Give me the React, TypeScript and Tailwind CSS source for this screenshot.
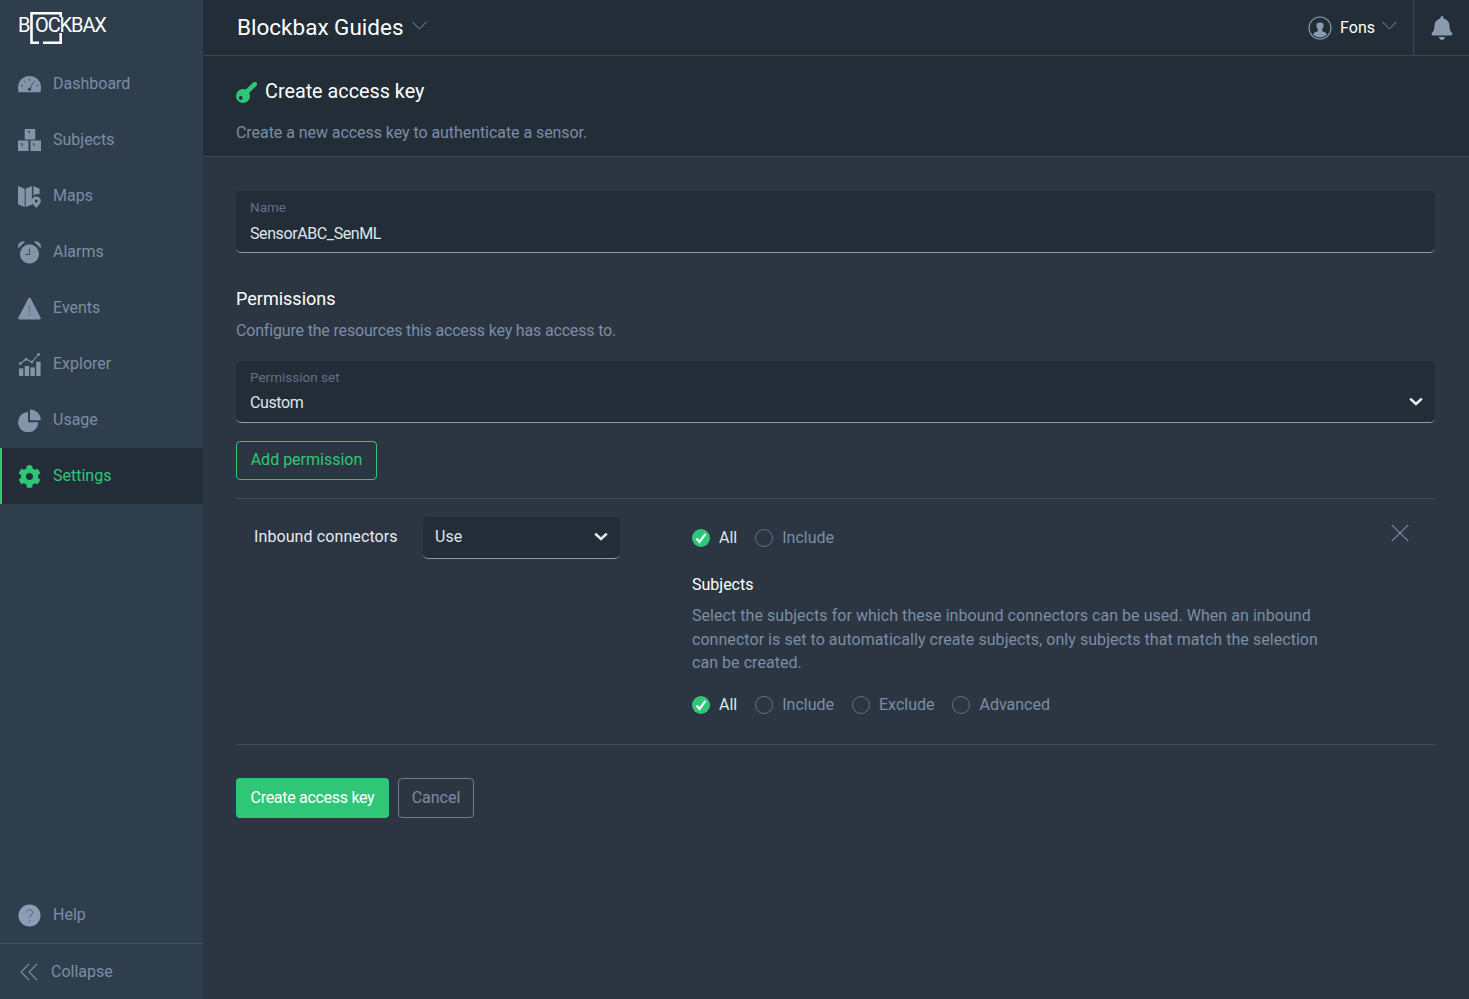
import { FaCog, FaBell } from "react-icons/fa"
import type { ReactNode } from "react"

const font = { fontFamily: 'Roboto, "Noto Sans", sans-serif' }
const dark = "#2f3e4d"

function GaugeIcon({ className }: { className?: string }) {
  return (
    <svg viewBox="0 0 24 24" className={className} fill="currentColor">
      <path d="M0.6 20 Q0 18 0 15 A12 12 0 0 1 24 15 Q24 18 23.4 20 Z" />
      <path d="M12 6 V8 M6.5 8 L7.6 9.6 M17.5 8 L16.4 9.6 M3 13 L5 13.6 M21 13 L19 13.6 M12 17 L15.5 10.5" stroke={dark} strokeWidth="0.9" fill="none" />
      <circle cx="12" cy="17" r="1.6" fill={dark} />
    </svg>
  )
}

function BoxesIcon({ className }: { className?: string }) {
  return (
    <svg viewBox="0 0 24 24" className={className} fill="currentColor">
      <rect x="7" y="0" width="11" height="11" />
      <rect x="0" y="12" width="11" height="11" />
      <rect x="13" y="12" width="11" height="11" />
      <path d="M12 5 V2.5 H9.5 M4.5 18 V15.5 H2.5 M17 18 V15.5 H15" fill="none" stroke={dark} strokeWidth="0.8" />
    </svg>
  )
}

function MapIcon({ className }: { className?: string }) {
  return (
    <svg viewBox="0 0 24 24" className={className} fill="currentColor">
      <path d="M0 1 L7 4 V23 L0 20 Z" />
      <path d="M8 4 L14.5 1 V14 Q14.5 18 15.5 20 L8 23 Z" />
      <path d="M16 1 L22.5 4 V10 A6 6 0 0 0 16 11 Z" />
      <path d="M19 12 A4.8 4.8 0 0 1 23.8 16.8 Q23.8 19 19 24 Q14.2 19 14.2 16.8 A4.8 4.8 0 0 1 19 12 Z M19 15.2 A1.6 1.6 0 1 0 19 18.4 A1.6 1.6 0 1 0 19 15.2 Z" fillRule="evenodd" />
    </svg>
  )
}

function AlarmIcon({ className }: { className?: string }) {
  return (
    <svg viewBox="0 0 24 24" className={className} fill="currentColor">
      <circle cx="12" cy="13.5" r="10" />
      <path d="M0.3 7.5 A5.6 5.6 0 0 1 7.5 0.6 Z M23.7 7.5 A5.6 5.6 0 0 0 16.5 0.6 Z" />
      <path d="M12 8 V14 H7.5" stroke={dark} strokeWidth="0.9" fill="none" />
    </svg>
  )
}

function TriangleIcon({ className }: { className?: string }) {
  return (
    <svg viewBox="0 0 24 24" className={className} fill="currentColor">
      <path d="M12 0.5 Q12.8 0.5 13.3 1.5 L23.8 22 Q24 23.5 22.8 23.5 H1.2 Q0 23.5 0.2 22 L10.7 1.5 Q11.2 0.5 12 0.5 Z" />
      <path d="M12 9 V16" stroke="#6a7b92" strokeWidth="1.6" />
      <circle cx="12" cy="19" r="1" fill="#6a7b92" />
    </svg>
  )
}

function ExplorerIcon({ className }: { className?: string }) {
  return (
    <svg viewBox="0 0 24 24" className={className} fill="currentColor">
      <rect x="1" y="16" width="4.6" height="8" />
      <rect x="7" y="13.5" width="4.6" height="10.5" />
      <rect x="13" y="15" width="4.6" height="9" />
      <rect x="19" y="9" width="4.6" height="15" />
      <path d="M2.5 11 L8.5 6.5 L14.5 9.5 L21.5 1.5" fill="none" stroke="currentColor" strokeWidth="1.1" />
      <circle cx="2.5" cy="11" r="1.4" />
      <circle cx="8.5" cy="6.5" r="1.4" />
      <circle cx="14.5" cy="9.5" r="1.4" />
      <circle cx="21.5" cy="1.5" r="1.4" />
    </svg>
  )
}

function PieIcon({ className }: { className?: string }) {
  return (
    <svg viewBox="0 0 24 24" className={className} fill="currentColor">
      <path d="M10.5 3.2 A10.6 10.6 0 1 0 21.2 13.7 H10.5 Z" />
      <path d="M12.5 0.5 A11 11 0 0 1 23.7 11.7 H12.5 Z" />
    </svg>
  )
}

function HelpIcon({ className }: { className?: string }) {
  return (
    <svg viewBox="0 0 24 24" className={className}>
      <circle cx="12" cy="12" r="11.5" fill="#8c9eb5" />
      <path d="M8.8 9 A3.2 3.2 0 1 1 13.6 11.8 Q12 12.7 12 14.6" fill="none" stroke="#63768f" strokeWidth="1.3" />
      <circle cx="12" cy="17.6" r="1" fill="#63768f" />
    </svg>
  )
}

function KeyIcon() {
  return (
    <svg viewBox="0 0 21 21" className="w-[21px] h-[21px] mr-[8px] text-[#2fc678]" fill="currentColor">
      <path d="M7 7 A7 7 0 1 0 7 21 A7 7 0 1 0 7 7 Z M4.8 14 A1.9 1.9 0 1 1 4.8 17.8 A1.9 1.9 0 1 1 4.8 14 Z" fillRule="evenodd" />
      <path d="M8.5 12 L18.8 2.2" stroke="currentColor" strokeWidth="4.6" strokeLinecap="round" fill="none" />
    </svg>
  )
}

function UserIcon() {
  return (
    <svg viewBox="0 0 24 24" className="w-[24px] h-[24px] text-[#8a9bb0]">
      <circle cx="12" cy="12" r="11" fill="none" stroke="currentColor" strokeWidth="1.1" />
      <path d="M8.4 8.5 C8.4 5.8 15.6 5.8 15.6 8.5 C15.6 11 14.8 13 14 14 L14 15 C16 16 18.4 16.4 19 18.6 A10 10 0 0 1 5 18.6 C5.6 16.4 8 16 10 15 L10 14 C9.2 13 8.4 11 8.4 8.5 Z" fill="currentColor" />
    </svg>
  )
}

function Caret({ className }: { className?: string }) {
  return (
    <svg viewBox="0 0 15 9" className={className} fill="none" stroke="currentColor" strokeWidth="1">
      <path d="M0.5 0.8 L7.5 8 L14.5 0.8" />
    </svg>
  )
}

function SelectCaret() {
  return (
    <svg viewBox="0 0 14 9" className="w-[14px] h-[9px] text-[#e6ebf0]" fill="none" stroke="currentColor" strokeWidth="2.6">
      <path d="M1.2 1.6 L7 7 L12.8 1.6" />
    </svg>
  )
}

function Logo() {
  return (
    <div className="relative w-[90px] h-[32px] ml-[18px] mt-[12px] text-white text-[20px] leading-[26px] tracking-[-1.1px]">
      <span className="absolute left-0 top-0">B</span>
      <span className="absolute left-[17px] top-0">OCKBAX</span>
      <svg viewBox="0 0 32 32" className="absolute left-[12px] top-0 w-[32px] h-[32px]" fill="none" stroke="#ffffff" strokeWidth="2.6">
        <path d="M30.7 5 V1.3 H1.5 V30.7 H9" />
        <path d="M13 30.7 H30.7 V21" />
      </svg>
    </div>
  )
}

function NavItem({ icon, label, active }: { icon: ReactNode; label: string; active?: boolean }) {
  return (
    <div className={`h-[56px] flex items-center pl-[18px] relative ${active ? "bg-[#232d38] text-[#2fc678]" : "text-[#7b8da5]"}`}>
      {active && <div className="absolute left-0 top-0 bottom-0 w-[2px] bg-[#2fc678]" />}
      <div className="w-[23px] h-[23px] flex items-center justify-center mr-[12px] text-[#8494a9]" style={active ? { color: "#2fc678" } : undefined}>{icon}</div>
      <span className="text-[16px]">{label}</span>
    </div>
  )
}

function Field({ label, value, select }: { label: string; value: string; select?: boolean }) {
  return (
    <div className="h-[62px] bg-[#232d38] rounded-[5px] border-b border-[#8a9bb0] px-[14px] pt-[7px] relative">
      <div className="text-[13.5px] leading-[18px] text-[#5f7089]">{label}</div>
      <div className={`text-[16px] leading-[24px] text-[#dfe5ec] tracking-[-0.4px] ${select ? "mt-[5px]" : "mt-[6px]"}`}>{value}</div>
      {select && (
        <div className="absolute right-[12px] top-[36px]">
          <SelectCaret />
        </div>
      )}
    </div>
  )
}

function Radio({ label, checked }: { label: string; checked?: boolean }) {
  return (
    <div className="flex items-center">
      {checked ? (
        <div className="w-[18px] h-[18px] rounded-full bg-[#2fc678] flex items-center justify-center mr-[9px]">
          <svg viewBox="0 0 12 12" className="w-[12px] h-[12px]" fill="none" stroke="#ffffff" strokeWidth="2.2">
            <path d="M1.5 6.5 L4.5 10 L10.5 1.8" />
          </svg>
        </div>
      ) : (
        <div className="w-[18px] h-[18px] rounded-full border border-[#5f7089] mr-[9px]" />
      )}
      <span className={`text-[16px] ${checked ? "text-[#dfe5ec]" : "text-[#7b8da5]"}`}>{label}</span>
    </div>
  )
}

export default function App() {
  const iconCls = "w-[23px] h-[23px]"
  return (
    <div className="flex w-full h-[999px] bg-[#2b3642] overflow-hidden" style={font}>
      {/* Sidebar */}
      <aside className="w-[203px] shrink-0 bg-[#2f3e4d] flex flex-col">
        <div className="h-[56px]">
          <Logo />
        </div>
        <nav className="flex-1">
          <NavItem label="Dashboard" icon={<GaugeIcon className={iconCls} />} />
          <NavItem label="Subjects" icon={<BoxesIcon className={iconCls} />} />
          <NavItem label="Maps" icon={<MapIcon className={iconCls} />} />
          <NavItem label="Alarms" icon={<AlarmIcon className={iconCls} />} />
          <NavItem label="Events" icon={<TriangleIcon className={iconCls} />} />
          <NavItem label="Explorer" icon={<ExplorerIcon className={iconCls} />} />
          <NavItem label="Usage" icon={<PieIcon className={iconCls} />} />
          <NavItem label="Settings" active icon={<FaCog className={iconCls} />} />
        </nav>
        <NavItem label="Help" icon={<HelpIcon className={iconCls} />} />
        <div className="border-t border-[#43545f] h-[56px] flex items-center pl-[20px] text-[#7b8da5]">
          <svg viewBox="0 0 18 18" className="w-[18px] h-[18px] mr-[13px]" fill="none" stroke="currentColor" strokeWidth="1.1">
            <path d="M9 1 L1 9 L9 17 M17 1 L9 9 L17 17" />
          </svg>
          <span className="text-[16px]">Collapse</span>
        </div>
      </aside>

      <main className="flex-1 min-w-0 flex flex-col">
        {/* Top bar */}
        <header className="h-[56px] bg-[#232d38] border-b border-[#3a4653] flex items-center pl-[34px] text-white">
          <span className="text-[22.5px]">Blockbax Guides</span>
          <Caret className="w-[15px] h-[9px] ml-[8px] mb-[4px] text-[#7b8da5]" />
          <div className="ml-auto flex items-center h-full">
            <UserIcon />
            <span className="text-[16px] ml-[8px]">Fons</span>
            <Caret className="w-[15px] h-[9px] ml-[7px] mb-[4px] text-[#7b8da5]" />
            <div className="w-px h-full bg-[#3a4653] ml-[16px]" />
            <div className="w-[55px] flex justify-center">
              <FaBell className="w-[24px] h-[24px] text-[#8a9bb0]" />
            </div>
          </div>
        </header>

        {/* Page header */}
        <div className="h-[101px] bg-[#232d38] border-b border-[#3a4653] pl-[33px] pt-[21px]">
          <div className="flex items-center h-[30px]">
            <KeyIcon />
            <span className="text-[19.8px] text-white">Create access key</span>
          </div>
          <p className="text-[16px] leading-[24px] text-[#7b8da5] mt-[14px] tracking-[-0.06px]">Create a new access key to authenticate a sensor.</p>
        </div>

        {/* Form */}
        <div className="pl-[33px] pr-[34px] pt-[34px]">
          <Field label="Name" value="SensorABC_SenML" />

          <h2 className="text-[18px] leading-[24px] text-white mt-[34px]">Permissions</h2>
          <p className="text-[16px] leading-[24px] text-[#7b8da5] mt-[8px] tracking-[-0.17px]">Configure the resources this access key has access to.</p>

          <div className="mt-[18px]">
            <Field label="Permission set" value="Custom" select />
          </div>

          <button className="mt-[18px] block h-[39px] w-[141px] rounded-[4px] border border-[#2fc678] pb-[2px] text-[16px] text-[#2fc678]">Add permission</button>

          <div className="mt-[18px] border-t border-b border-[#414d5a] pt-[18px] pb-[27px] flex items-start">
            <div className="w-[187px] pl-[18px] h-[40px] flex items-center text-[16px] text-[#e6ebf0] shrink-0 tracking-[0.1px]">Inbound connectors</div>
            <div className="w-[197px] h-[42px] shrink-0 bg-[#232d38] rounded-[5px] border-b border-[#8a9bb0] flex items-center justify-between pl-[12px] pr-[12px] pb-[2px] text-[16px] text-[#dfe5ec]">
              <span>Use</span>
              <SelectCaret />
            </div>
            <div className="ml-[72px] flex-1 min-w-0 pt-[9px]">
              <div className="flex gap-[18px] h-[24px]">
                <Radio label="All" checked />
                <Radio label="Include" />
              </div>
              <h3 className="text-[16px] leading-[24px] text-white mt-[23px]">Subjects</h3>
              <p className="text-[16px] leading-[23.5px] text-[#7b8da5] mt-[7px] w-[640px] tracking-[0.05px]">
                Select the subjects for which these inbound connectors can be used. When an inbound connector is set to automatically create subjects, only subjects that match the selection can be created.
              </p>
              <div className="flex gap-[18px] h-[24px] mt-[18px]">
                <Radio label="All" checked />
                <Radio label="Include" />
                <Radio label="Exclude" />
                <Radio label="Advanced" />
              </div>
            </div>
            <svg viewBox="0 0 18 18" className="w-[18px] h-[18px] mr-[26px] mt-[7px] text-[#7b8da5] shrink-0" fill="none" stroke="currentColor" strokeWidth="1.1">
              <path d="M0.8 0.8 L17.2 17.2 M17.2 0.8 L0.8 17.2" />
            </svg>
          </div>

          <div className="flex gap-[9px] mt-[33px]">
            <button className="h-[40px] w-[153px] rounded-[4px] bg-[#2fc678] text-[16px] text-white tracking-[-0.3px]">Create access key</button>
            <button className="h-[40px] w-[76px] rounded-[4px] border border-[#6d7d92] text-[16px] text-[#7b8da5]">Cancel</button>
          </div>
        </div>
      </main>
    </div>
  )
}
